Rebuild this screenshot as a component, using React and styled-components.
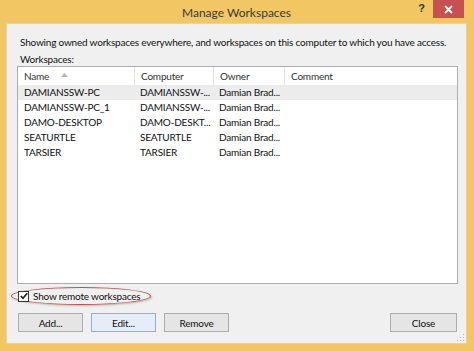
import React from "react";
import styled, { createGlobalStyle } from "styled-components";

const GlobalStyle = createGlobalStyle`
  html, body {
    margin: 0;
    padding: 0;
    background: #f2c662;
  }
  body {
    font-family: Lato, "Noto Sans", sans-serif;
  }
`;

const rows = [
  { name: "DAMIANSSW-PC", computer: "DAMIANSSW-...", owner: "Damian Brad...", hot: true },
  { name: "DAMIANSSW-PC_1", computer: "DAMIANSSW-...", owner: "Damian Brad..." },
  { name: "DAMO-DESKTOP", computer: "DAMO-DESKT...", owner: "Damian Brad..." },
  { name: "SEATURTLE", computer: "SEATURTLE", owner: "Damian Brad..." },
  { name: "TARSIER", computer: "TARSIER", owner: "Damian Brad..." }
];

export default function App() {
  return (
    <Window>
      <GlobalStyle />
      <TitleBar>
        <Title>Manage Workspaces</Title>
        <Help>?</Help>
        <CloseBox>
          <svg width="9" height="9" viewBox="0 0 9 9">
            <path d="M1 1 L8 8 M8 1 L1 8" stroke="#fff" strokeWidth="1.8" />
          </svg>
        </CloseBox>
      </TitleBar>
      <Client>
        <Info>Showing owned workspaces everywhere, and workspaces on this computer to which you have access.</Info>
        <Label>Workspaces:</Label>
        <List>
          <Header>
            <HeadCell>
              Name
              <SortArrow>
                <svg width="7" height="4" viewBox="0 0 7 4">
                  <path d="M0 4 L3.5 0 L7 4 Z" fill="#b5b5b5" />
                </svg>
              </SortArrow>
            </HeadCell>
            <HeadCell sep>Computer</HeadCell>
            <HeadCell sep>Owner</HeadCell>
            <HeadCell sep>Comment</HeadCell>
          </Header>
          {rows.map(r => (
            <Row key={r.name} hot={r.hot}>
              <Cell>{r.name}</Cell>
              <Cell>{r.computer}</Cell>
              <Cell>{r.owner}</Cell>
              <Cell />
            </Row>
          ))}
        </List>
        <CheckLine>
          <Ring>
            <Box>
              <svg width="8" height="8" viewBox="0 0 8 8">
                <path d="M0.8 4 L3 6.3 L7.2 1.2" stroke="#222" strokeWidth="1.7" fill="none" />
              </svg>
            </Box>
            Show remote workspaces
          </Ring>
        </CheckLine>
        <Buttons>
          <Button>Add...</Button>
          <Button focused>Edit...</Button>
          <Button>Remove</Button>
          <Spacer />
          <Button>Close</Button>
        </Buttons>
        <Grip>
          <svg width="8" height="8" viewBox="0 0 8 8">
            <rect x="6" y="0" width="1" height="1" fill="#b8b8b8" />
            <rect x="3" y="3" width="1" height="1" fill="#b8b8b8" />
            <rect x="6" y="3" width="1" height="1" fill="#b8b8b8" />
            <rect x="0" y="6" width="1" height="1" fill="#b8b8b8" />
            <rect x="3" y="6" width="1" height="1" fill="#b8b8b8" />
            <rect x="6" y="6" width="1" height="1" fill="#b8b8b8" />
          </svg>
        </Grip>
      </Client>
    </Window>
  );
}

const Window = styled.div`
  width: 474px;
  height: 351px;
  box-sizing: border-box;
  display: flex;
  flex-direction: column;
  background: #f2c662;
  padding: 0 7px 7px 6px;
`;

const TitleBar = styled.div`
  position: relative;
  height: 23px;
  display: flex;
  align-items: center;
  justify-content: center;
`;

const Title = styled.div`
  font-family: Lato, sans-serif;
  font-size: 12px;
  color: #3a3a3a;
  margin-top: 1px;
`;

const Help = styled.div`
  position: absolute;
  right: 42px;
  top: 2px;
  font-family: "Liberation Sans", sans-serif;
  font-weight: bold;
  font-size: 11px;
  color: #333;
`;

const CloseBox = styled.div`
  position: absolute;
  right: 3px;
  top: 0;
  width: 31px;
  height: 18px;
  background: #c75050;
  display: flex;
  align-items: center;
  justify-content: center;
`;

const Client = styled.div`
  position: relative;
  flex: 1;
  background: #f0f0f0;
  border: 1px solid #e3d3a8;
  display: flex;
  flex-direction: column;
  padding: 10px 8px 0 10px;
  font-size: 10px;
  letter-spacing: -0.2px;
  color: #111;
`;

const Info = styled.div`
  padding-left: 3px;
  line-height: 16px;
  white-space: nowrap;
`;

const Label = styled.div`
  padding-left: 3px;
  margin-top: 2px;
  line-height: 14px;
`;

const List = styled.div`
  height: 218px;
  box-sizing: border-box;
  background: #fff;
  border: 1px solid #abadb3;
`;

const Header = styled.div`
  display: grid;
  grid-template-columns: 116px 79px 71px 168px;
  height: 18px;
`;

const HeadCell = styled.div`
  display: flex;
  align-items: center;
  padding-left: 6px;
  border-left: ${p => (p.sep ? "1px solid #e5e5e5" : "none")};
  color: #333;
  white-space: nowrap;
`;

const SortArrow = styled.span`
  display: inline-flex;
  margin-left: 12px;
  margin-top: -2px;
`;

const Row = styled.div`
  display: grid;
  grid-template-columns: 116px 79px 71px 168px;
  height: 15px;
  align-items: center;
  background: ${p => (p.hot ? "#ececec" : "transparent")};
`;

const Cell = styled.div`
  padding-left: 6px;
  white-space: nowrap;
  overflow: hidden;
  line-height: 15px;
`;

const CheckLine = styled.div`
  display: flex;
  margin-top: 3px;
  margin-left: -6px;
`;

const Ring = styled.div`
  display: inline-flex;
  align-items: center;
  gap: 4px;
  height: 16px;
  padding: 0 10px 0 6px;
  border: 1.5px solid #b5504e;
  border-radius: 50%;
  box-shadow: 1px 1px 2px rgba(120, 60, 40, 0.35);
  line-height: 16px;
`;

const Box = styled.span`
  width: 9px;
  height: 9px;
  border: 1px solid #333;
  background: #fff;
  display: inline-flex;
  align-items: center;
  justify-content: center;
`;

const Buttons = styled.div`
  display: flex;
  gap: 8px;
  margin-top: 8px;
  padding-left: 1px;
`;

const Spacer = styled.div`
  flex: 1;
`;

const Button = styled.div`
  width: 65px;
  height: 19px;
  box-sizing: border-box;
  border: 1px solid ${p => (p.focused ? "#7eb4ea" : "#acacac")};
  background: ${p => (p.focused ? "#e5eef8" : "#e5e5e5")};
  display: flex;
  align-items: center;
  justify-content: center;
  color: #111;
  &:last-child {
    width: 67px;
    margin-right: 1px;
  }
`;

const Grip = styled.div`
  position: absolute;
  right: 1px;
  bottom: 1px;
  display: flex;
`;
